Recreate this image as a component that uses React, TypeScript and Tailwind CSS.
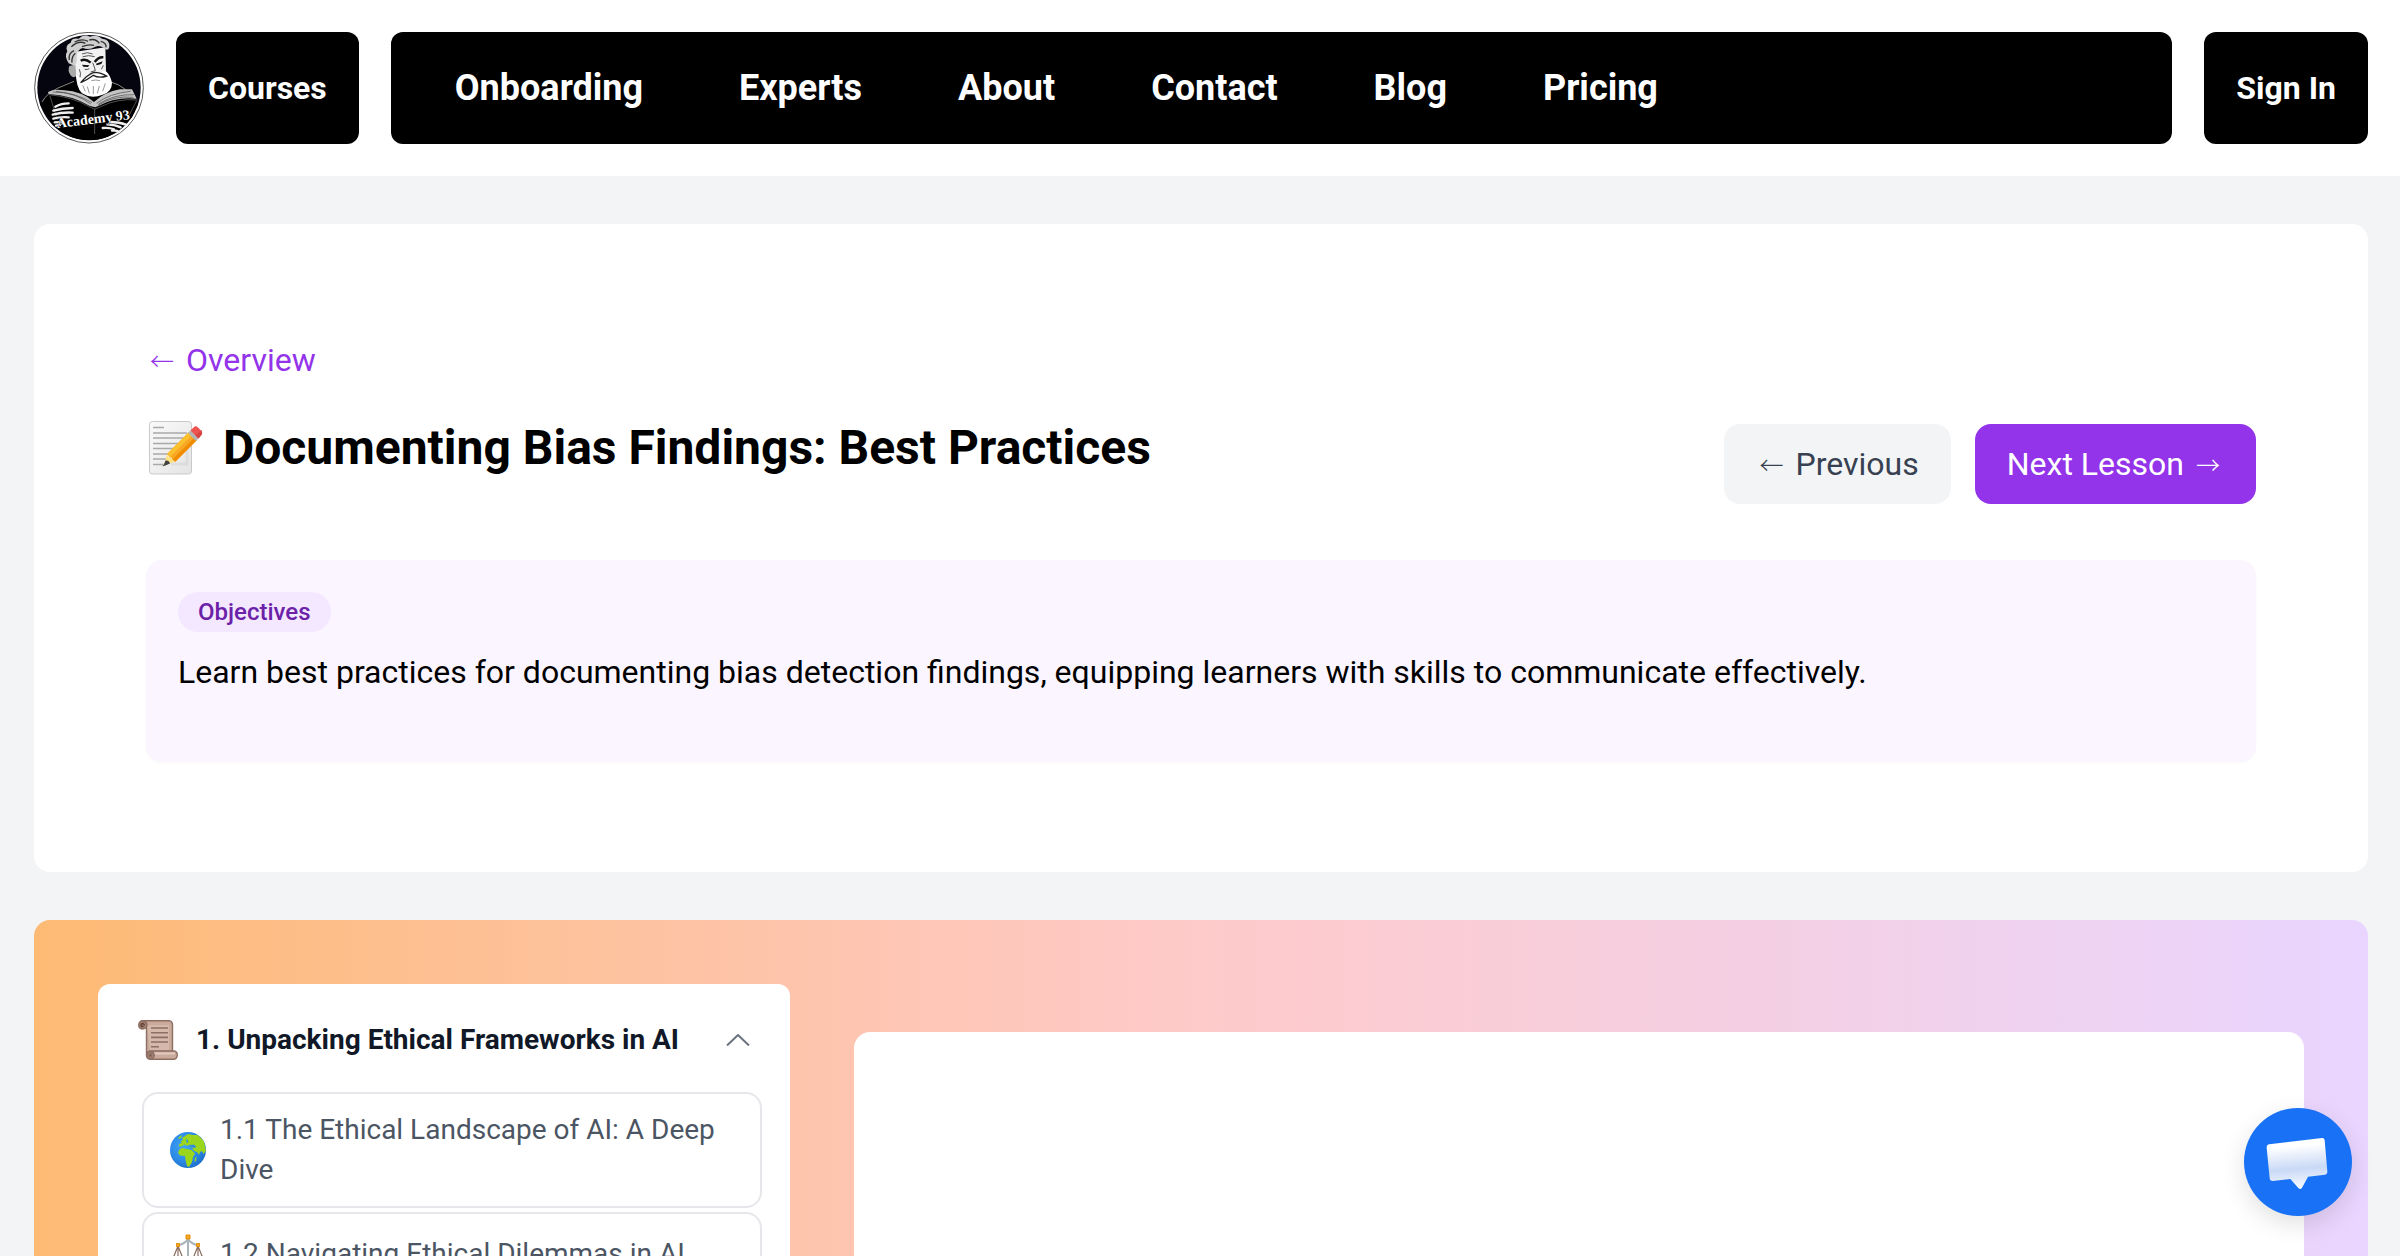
import React from 'react';

const navLinks = ['Onboarding', 'Experts', 'About', 'Contact', 'Blog', 'Pricing'];

const Logo: React.FC = () => (
  <svg className="h-28 w-[110px]" viewBox="6 6 330 336" role="img" aria-label="Academy 93">
    <ellipse cx="171" cy="173" rx="163" ry="166" fill="#fff" stroke="#555" strokeWidth="3" />
    <ellipse cx="171" cy="173" rx="155" ry="158" fill="#04050f" />
    {/* coat */}
    <path d="M24 224Q40 178 128 150L222 152Q300 172 318 222L300 262Q240 335 171 330Q90 330 48 258Z" fill="#000" />
    <path d="M30 216Q44 190 78 174L126 154M226 152Q262 162 286 182" fill="none" stroke="#8a8a8a" strokeWidth="3" />
    {/* face and hair */}
    <path d="M126 66L220 52L222 120Q216 168 176 178Q138 166 130 136Z" fill="#f2f2f2" />
    <path d="M112 108Q106 122 116 136Q126 148 133 136L130 104Z" fill="#aaa" />
    <path
      d="M110 100Q96 78 106 64Q98 46 116 38Q118 22 140 26Q156 10 174 20Q196 12 210 26Q234 28 232 50Q230 62 220 58Q206 44 190 50Q172 62 152 54Q136 58 134 78Q136 96 128 108Z"
      fill="#cfcfcf"
    />
    <path
      d="M112 90Q108 70 126 62M118 50Q140 30 160 40M128 36Q150 24 168 34M172 30Q190 24 202 40M150 50Q170 42 186 46M206 34Q224 38 222 52M120 98Q118 80 130 70"
      fill="none"
      stroke="#333"
      strokeWidth="4"
    />
    <path d="M146 92Q160 84 176 98M188 96Q200 80 214 82" fill="none" stroke="#111" strokeWidth="7" />
    <path d="M150 104L172 106L168 111L154 110ZM192 101L212 94L208 102L194 106Z" fill="#111" />
    <path
      d="M182 98Q188 112 190 122L176 126M150 72Q166 64 182 72M152 80Q170 74 188 80M142 118Q148 130 144 142M214 106L208 118M158 118Q166 120 172 116"
      fill="none"
      stroke="#555"
      strokeWidth="3"
    />
    <path d="M132 128Q140 148 156 144Q178 132 196 134Q216 120 222 124Q234 134 240 158Q240 186 212 194Q178 208 150 190Q132 172 132 128Z" fill="#fff" />
    <path d="M146 158Q166 150 184 136Q202 146 224 138Q208 128 186 127Q166 134 146 158Z" fill="#fff" stroke="#222" strokeWidth="4" />
    <path
      d="M178 152Q192 148 204 152M152 166L160 184M166 170L172 190M184 168V192M202 168L196 190M220 160L212 184"
      fill="none"
      stroke="#999"
      strokeWidth="3"
    />
    {/* open book */}
    <path d="M48 186Q66 176 96 181Q150 184 186 216Q218 186 264 178L300 178L314 206Q250 200 204 226L190 232L174 228Q120 196 50 192Z" fill="#c4c4c4" />
    <path
      d="M62 186Q130 186 180 218M72 184Q134 190 176 222M296 184Q232 190 194 220M306 194Q246 192 200 222M304 202Q244 196 198 226"
      fill="none"
      stroke="#444"
      strokeWidth="2"
    />
    <path d="M50 194Q120 200 172 230L188 238L206 230Q258 204 316 210L294 262Q240 318 184 318Q112 310 74 272Z" fill="#000" />
    <path d="M50 194Q120 200 172 230L188 238L206 230Q258 204 316 210M188 236V312M54 198L76 270M314 212L290 258" fill="none" stroke="#777" strokeWidth="2" />
    {/* hands */}
    <path
      d="M70 230Q88 220 110 220M64 242Q90 234 122 234M62 254Q92 246 122 248M64 266Q86 260 110 262M68 277L92 276M72 287L84 285M212 294Q232 292 246 298M226 284Q246 282 266 292M236 276Q262 276 282 284M240 302Q254 300 262 306"
      fill="none"
      stroke="#f0f0f0"
      strokeWidth="7"
      strokeLinecap="round"
    />
    <text
      x="76"
      y="294"
      transform="rotate(-7 76 294)"
      fill="#fff"
      stroke="#000"
      strokeWidth="2"
      paintOrder="stroke"
      className="font-['Liberation_Serif',serif] text-[42px] font-bold"
    >
      Academy 93
    </text>
  </svg>
);

const MemoIcon: React.FC = () => (
  <svg className="ml-[3px] h-[54px] w-[54px]" viewBox="0 0 54 54" aria-hidden="true">
    <defs>
      <linearGradient id="paper" x1="0" y1="0" x2="1" y2="1">
        <stop offset="0" stopColor="#fafafa" />
        <stop offset="1" stopColor="#e4e4e4" />
      </linearGradient>
    </defs>
    <rect x="0.500" y="0.500" width="42" height="52.500" rx="3" fill="url(#paper)" stroke="#c9c9c9" />
    <path d="M4 6.500H15M4 12H38M4 17H38M4 22.500H34M4 27.500H30M4 33H26M4 38H22M4 43.500H14" stroke="#a9a9a9" strokeWidth="1.300" />
    <path d="M22 43H38V27" fill="none" stroke="#000" strokeOpacity="0.050" strokeWidth="3" />
    <path d="M18 33L40 11L48 19L26 41Z" fill="#f9a825" />
    <path d="M18 33L40 11L43 14L21 36Z" fill="#fbc02d" />
    <path d="M23.500 38.500L45.500 16.500L48 19L26 41Z" fill="#f08c00" />
    <path d="M39 12L42 9L50 17L47 20Z" fill="#b5b5b5" />
    <path d="M41.500 9.500L45 6Q47 4.500 49 6.500L52.500 10Q54 12 52.500 14L49.500 17.500Z" fill="#ef5350" />
    <path d="M46.500 14.500L52.500 9L53 13L49.500 17.500Z" fill="#d84340" />
    <path d="M18 33Q17 39 14 45Q21 42.500 27 40Q22 40 23 36.500Q18 37 18 33Z" fill="#ffe082" />
    <path d="M16.500 39.500Q16 42 13.500 45.500Q18 44 21 42.500Q20 39 16.500 39.500Z" fill="#424242" />
  </svg>
);

const ScrollIcon: React.FC = () => (
  <svg className="h-10 w-10" viewBox="0 0 40 40" fill="#c9aa9b" stroke="#8d6e63" strokeWidth="1.400" aria-hidden="true">
    <path d="M4 0.700H31Q34.500 1 34.500 5V34H8.500V8Z" />
    <path d="M9 5H31V30H12Z" fill="#d5b8aa" stroke="none" />
    <path d="M4.500 0.700Q9 1 9 5.500Q8.500 9 4.500 9Q0.700 8.500 0.700 5Q1 1 4.500 0.700Z" fill="#a1806f" />
    <path d="M6.500 5.500Q6 3.500 4.500 3.500Q3 4 3 5.500Q3.500 7 5.500 6.500" fill="none" stroke="#5d4037" />
    <path d="M12.500 31H36Q39.300 31.500 39.300 35Q39 39 36 39.300H12.500Q8.500 39 8.500 35Q8.500 31.500 12.500 31Z" />
    <path d="M16 33.500H37" stroke="#e2cabd" strokeWidth="2" />
    <circle cx="12.500" cy="35.200" r="3.700" fill="#a1806f" />
    <circle cx="12.500" cy="35.200" r="1.200" fill="#5d4037" />
    <path d="M13 8H30M13 12.700H30M13 17.400H30M13 22H30M13 26.700H21" stroke="#8d6e63" strokeWidth="1.600" />
  </svg>
);

const GlobeIcon: React.FC = () => (
  <svg className="h-9 w-9" viewBox="0 0 36 36" aria-hidden="true">
    <defs>
      <radialGradient id="ocean" cx="0.4" cy="0.4" r="0.65">
        <stop offset="0" stopColor="#42a5f5" />
        <stop offset="0.6" stopColor="#2d8be8" />
        <stop offset="1" stopColor="#1b6fc9" />
      </radialGradient>
      <clipPath id="disc">
        <circle cx="18" cy="18" r="18" />
      </clipPath>
    </defs>
    <circle cx="18" cy="18" r="18" fill="url(#ocean)" />
    <g clipPath="url(#disc)" fill="#9bd61c">
      <path d="M15 4L18 2L23 3L28 3L34 9L36 19L33.500 22L32 19L30 20L29 23L27 20L24 19L22 16L20 15L19 13L17 14L15 12.500L12 14L9.500 15L9 12L12 11L10.500 9.500L13 8L12 6Z" />
      <path d="M9 18L12 16L17 17L22 18L25 21.500L23 25L22 30L19 35L17 34L15.500 28L15 24L10 23.500L8 21Z" />
      <path d="M9 5L12 3L11 6L8 7Z" />
      <path d="M25 26L26.500 24.500L26 29L24.500 30Z" />
    </g>
    <path d="M19 13.500L24 13L26 15L22 15.500ZM21 17L25 20.500M16 7L18 9L17 11" fill="#2d8be8" stroke="#2d8be8" strokeWidth="0.800" />
  </svg>
);

const ScalesIcon: React.FC = () => (
  <svg className="h-10 w-9" viewBox="0 0 36 40" fill="none" aria-hidden="true">
    <path d="M18 4V36M8 11.500Q14 10 18 5.500Q22 10 28 11.500" stroke="#a9b4ba" strokeWidth="2" />
    <path d="M8 12L2 27M8 12V27M8 12L14 27M28 12L22 27M28 12V27M28 12L34 27" stroke="#8d6e63" strokeWidth="1.200" />
    <path d="M1 27H15Q13 32 8 32Q3 32 1 27ZM21 27H35Q33 32 28 32Q23 32 21 27ZM10 36H26V39H10Z" fill="#f9a825" />
    <path d="M16 1H20V5H16ZM6.500 9.500H9.500V12.500H6.500ZM26.500 9.500H29.500V12.500H26.500Z" fill="#f9a825" stroke="#e08e0b" />
  </svg>
);

const ChatIcon: React.FC = () => (
  <svg className="h-[108px] w-[108px]" viewBox="0 0 324 324" aria-hidden="true">
    <defs>
      <linearGradient id="bubble" x1="0" y1="0" x2="0.1" y2="1">
        <stop offset="0.2" stopColor="#fff" />
        <stop offset="0.65" stopColor="#c9d9f6" />
        <stop offset="1" stopColor="#f4f8ff" />
      </linearGradient>
    </defs>
    <path
      d="M76 109L234 90Q241 89 242 97L250 190Q251 199 243 200L192 206L174 239Q169 246 163 240L139 213L86 219Q78 219 77 211L68 119Q68 110 76 109Z"
      fill="url(#bubble)"
    />
  </svg>
);

const Arrow: React.FC<{ children: string }> = ({ children }) => (
  <span className="w-8 text-center font-['Noto_Sans_CJK_JP',sans-serif] text-2xl leading-12 font-light">{children}</span>
);

const lessons = [
  { Icon: GlobeIcon, title: '1.1 The Ethical Landscape of AI: A Deep Dive' },
  { Icon: ScalesIcon, title: '1.2 Navigating Ethical Dilemmas in AI' },
];

export default function App() {
  return (
    <div className="min-h-screen bg-gray-100 font-[Roboto,sans-serif] text-black">
      <header className="flex items-stretch gap-8 bg-white py-8 pr-8 pl-[34px]">
        <a href="#home" className="shrink-0">
          <Logo />
        </a>
        <button className="rounded-xl bg-black px-8 text-[32px] font-bold text-white">Courses</button>
        <nav className="flex flex-1 items-center gap-24 rounded-xl bg-black px-16 text-4xl font-bold text-white">
          {navLinks.map((label) => (
            <a key={label} href={`#${label.toLowerCase()}`}>
              {label}
            </a>
          ))}
        </nav>
        <button className="rounded-xl bg-black px-8 text-[32px] font-bold text-white">Sign In</button>
      </header>

      <main className="flex flex-col gap-12 pt-12 pr-8 pl-[34px] text-[32px] leading-12">
        <section className="rounded-2xl bg-white px-28 pt-28 pb-[110px]">
          <a href="#overview" className="flex w-fit items-center gap-2 text-[#9333ea]">
            <Arrow>←</Arrow> Overview
          </a>
          <div className="mt-10 flex items-start justify-between">
            <div className="flex h-12 items-center gap-5">
              <MemoIcon />
              <h1 className="text-5xl leading-12 font-bold">Documenting Bias Findings: Best Practices</h1>
            </div>
            <div className="flex gap-6">
              <button className="flex items-center gap-2 rounded-2xl bg-gray-100 px-8 py-4 text-[#374151]">
                <Arrow>←</Arrow> Previous
              </button>
              <button className="flex items-center gap-2 rounded-2xl bg-[#9333ea] px-8 py-4 text-white">
                Next Lesson <Arrow>→</Arrow>
              </button>
            </div>
          </div>
          <div className="mt-14 rounded-2xl bg-[#faf5ff] px-8 pt-8 pb-[66px] shadow-[0_1px_2px_rgba(0,0,0,0.03)]">
            <span className="block w-fit rounded-full bg-[#f3e8ff] px-5 py-1 text-2xl font-medium text-[#6b21a8]">
              Objectives
            </span>
            <p className="mt-4">
              Learn best practices for documenting bias detection findings, equipping learners with skills to
              communicate effectively.
            </p>
          </div>
        </section>

        <section className="flex items-start gap-16 rounded-t-2xl bg-linear-to-r/srgb from-[#fdba74] via-[#fecaca] to-[#e9d5ff] px-16 pt-16">
          <aside className="w-[692px] shrink-0 rounded-t-xl bg-white pt-8">
            <button className="flex h-12 w-full items-center px-10 text-[28px] font-bold text-[#111827]">
              <ScrollIcon />
              <span className="ml-[18px]">1. Unpacking Ethical Frameworks in AI</span>
              <svg className="ml-auto h-3 w-6" viewBox="0 0 24 12" fill="none" stroke="#6b7280" strokeWidth="2">
                <path d="M1 11.500L12 1L23 11.500" />
              </svg>
            </button>
            <ul className="mt-7 flex flex-col gap-1 pr-7 pl-11 text-[28px] leading-10 text-[#4b5563]">
              {lessons.map(({ Icon, title }) => (
                <li key={title}>
                  <a href="#lesson" className="flex items-center gap-3 rounded-2xl border-2 border-gray-200 px-6 py-4">
                    <span className="flex h-12 w-10 shrink-0 items-center justify-center">
                      <Icon />
                    </span>
                    <span>{title}</span>
                  </a>
                </li>
              ))}
            </ul>
          </aside>
          <article className="mt-12 h-64 flex-1 rounded-t-2xl bg-white" />
        </section>
      </main>

      <button
        aria-label="Open chat"
        className="fixed right-12 bottom-10 rounded-full bg-[#1972f5] shadow-[0_8px_24px_rgba(0,0,0,0.12)]"
      >
        <ChatIcon />
      </button>
    </div>
  );
}
